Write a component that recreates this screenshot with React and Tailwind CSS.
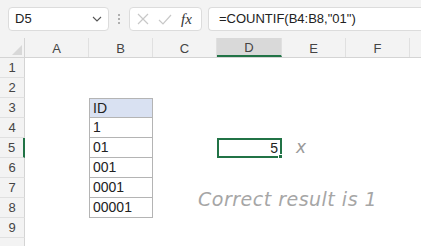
import React from 'react';

const cols = ['A', 'B', 'C', 'D', 'E', 'F', ''];
const widths = ['w-[64px]', 'w-[64px]', 'w-[64px]', 'w-[65px]', 'w-[64px]', 'w-[64px]', 'w-[64px]'];
const ids = { 3: 'ID', 4: '1', 5: '01', 6: '001', 7: '0001', 8: '00001' };

export default function App() {
  return (
    <div className="w-[421px] h-[246px] overflow-hidden bg-white font-['Liberation_Sans',sans-serif] text-[#222]">
      {/* Formula bar */}
      <div className="h-[38px] bg-[#f3f3f3] flex items-center pl-[8px] gap-[6px]">
        <div className="w-[101px] h-[24px] bg-white border border-[#dcdcdc] rounded-[4px] flex items-center justify-between px-[6px]">
          <span className="text-[13px]">D5</span>
          <svg width="10" height="6" viewBox="0 0 10 6"><path d="M1 1l4 4 4-4" fill="none" stroke="#555" strokeWidth="1.1" /></svg>
        </div>
        <div className="flex flex-col gap-[2px] px-[3px]">
          <span className="w-[2px] h-[2px] bg-[#999] rounded-full" />
          <span className="w-[2px] h-[2px] bg-[#999] rounded-full" />
          <span className="w-[2px] h-[2px] bg-[#999] rounded-full" />
        </div>
        <div className="w-[73px] h-[24px] bg-white border border-[#dcdcdc] rounded-[4px] flex items-center pl-[7px] gap-[9px]">
          <svg width="12" height="12" viewBox="0 0 12 12"><path d="M1 1l10 10M11 1L1 11" stroke="#c8c8c8" strokeWidth="1.2" /></svg>
          <svg width="14" height="11" viewBox="0 0 14 11"><path d="M1 6l4 4 8-9" fill="none" stroke="#c8c8c8" strokeWidth="1.2" /></svg>
          <span className="font-['Liberation_Serif',serif] italic text-[15px] text-[#333] leading-none">fx</span>
        </div>
        <div className="flex-1 h-[24px] bg-white border border-[#dcdcdc] rounded-l-[4px] border-r-0 flex items-center pl-[10px] text-[13px]">
          =COUNTIF(B4:B8,"01")
        </div>
      </div>

      {/* Column headers */}
      <div className="flex h-[20px] bg-[#f3f3f3] border-b border-[#d4d4d4] text-[13px] text-[#444]">
        <div className="w-[25px] shrink-0 border-r border-[#d4d4d4] flex items-end justify-end p-[2px]">
          <svg width="10" height="10" viewBox="0 0 10 10"><path d="M10 0V10H0Z" fill="#d8d8d8" /></svg>
        </div>
        {cols.map((c, i) => (
          <div
            key={i}
            className={`${widths[i]} shrink-0 border-r border-[#e0e0e0] flex items-center justify-center pt-[2px] ${c === 'D' ? 'bg-[#d9d9d9] border-b-2 border-b-[#217346]' : ''}`}
          >
            {c}
          </div>
        ))}
      </div>

      {/* Rows */}
      {[1, 2, 3, 4, 5, 6, 7, 8, 9, 10].map((r) => (
        <div key={r} className="flex h-[20px]">
          <div
            className={`w-[25px] shrink-0 bg-[#f3f3f3] border-b border-[#e0e0e0] flex items-center justify-center text-[13px] text-[#444] ${r === 5 ? 'bg-[#d9d9d9] border-r-2 border-r-[#217346]' : 'border-r border-r-[#d4d4d4]'}`}
          >
            {r < 10 ? r : ''}
          </div>
          <div className="w-[64px] shrink-0" />
          {ids[r] ? (
            <div
              className={`w-[64px] shrink-0 border-x border-b border-[#b4b4b4] flex items-center pl-[3px] text-[14px] ${r === 3 ? 'border-t bg-[#d9e1f2]' : ''}`}
            >
              {ids[r]}
            </div>
          ) : (
            <div className="w-[64px] shrink-0" />
          )}
          <div className="w-[64px] shrink-0" />
          {r === 5 ? (
            <div className="relative w-[65px] shrink-0 border-2 border-[#217346] flex items-center justify-end pr-[2px] text-[14px]">
              5
              <span className="absolute -right-[3px] -bottom-[3px] w-[5px] h-[5px] bg-[#217346] border border-white" />
            </div>
          ) : (
            <div className="w-[65px] shrink-0" />
          )}
          {r === 5 ? (
            <div className="flex items-center pl-[14px] text-[17px] text-[#9a9a9a] font-['DejaVu_Sans',sans-serif] italic">x</div>
          ) : null}
          {r === 7 ? (
            <div className="relative">
              <span className="absolute left-[-84px] top-[7px] whitespace-nowrap text-[19px] text-[#a6a6a6] italic font-['DejaVu_Sans',sans-serif] tracking-[0.5px]">
                Correct result is 1
              </span>
            </div>
          ) : null}
        </div>
      ))}
    </div>
  );
}
